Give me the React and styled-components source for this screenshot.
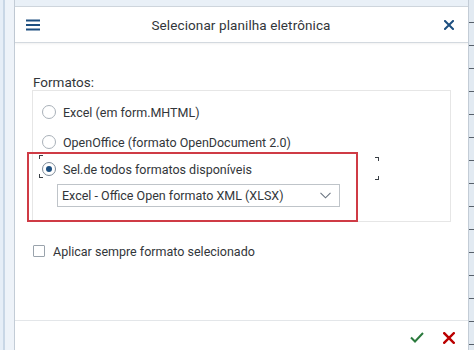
import React from "react";
import styled, { createGlobalStyle } from "styled-components";

const Global = createGlobalStyle`
  html, body { margin: 0; padding: 0; }
  body {
    background: #e4ecf4;
    font-family: Roboto, "Liberation Sans", Arial, sans-serif;
    color: #32363a;
  }
  * { box-sizing: border-box; }
`;

const Page = styled.div`
  width: 474px;
  height: 350px;
  overflow: hidden;
  display: flex;
  background: #e9f0f7;
`;

const LeftStrip = styled.div`
  width: 15px;
  flex: none;
  background: linear-gradient(to right, #e6eef7 0 3px, #c9d7e6 3px 5px, #eef3f9 5px 14px, #c3ccd6 14px 15px);
`;

const RightStrip = styled.div`
  width: 6px;
  flex: none;
  background:
    repeating-linear-gradient(to bottom, transparent 0 21px, #56606a 21px 22px, transparent 22px 23px),
    #e2eaf2;
  background-position: 0 1px;
  border-left: 1px solid #c3ccd6;
`;

const Center = styled.div`
  flex: 1;
  display: flex;
  flex-direction: column;
  padding-top: 6px;
`;

const Dialog = styled.div`
  flex: 1;
  background: #fff;
  display: flex;
  flex-direction: column;
  border-top: 1px solid #cfd6dd;
`;

const Header = styled.div`
  height: 36px;
  display: flex;
  align-items: center;
  padding: 0 12px 0 11px;
  border-bottom: 1px solid #d3d9df;
  box-shadow: 0 1px 2px rgba(0,0,0,0.06);
`;

const Title = styled.div`
  flex: 1;
  text-align: center;
  font-size: 13.5px;
  color: #32363a;
  letter-spacing: 0.1px;
`;

const IconBtn = styled.div`
  width: 14px;
  height: 14px;
  display: flex;
  align-items: center;
  justify-content: center;
  color: ${p => p.$color || "#1d4f80"};
`;

const Body = styled.div`
  position: relative;
  height: 277px;
  padding: 30px 17px 0 17px;
`;

const GroupLabel = styled.div`
  font-size: 13.5px;
  line-height: 18px;
  margin-bottom: -1px;
  padding-left: 1px;
`;

const Group = styled.div`
  border: 1px solid #e6e6e6;
  padding: 9px 9px 14px 9px;
  display: flex;
  flex-direction: column;
`;

const RadioRow = styled.div`
  display: flex;
  align-items: center;
  height: 24px;
  margin-top: ${p => p.$gap || 0}px;
  font-size: 12.5px;
`;

const RadioCircle = styled.span`
  width: 14px;
  height: 14px;
  border-radius: 50%;
  border: 1px solid ${p => (p.$checked ? "#7d8a98" : "#a9b1b9")};
  margin-right: 7px;
  display: flex;
  align-items: center;
  justify-content: center;
  flex: none;
  &::after {
    content: "";
    width: 6px;
    height: 6px;
    border-radius: 50%;
    background: ${p => (p.$checked ? "#1d4f80" : "transparent")};
  }
`;

const Select = styled.div`
  margin-top: 3px;
  margin-left: 15px;
  width: 283px;
  height: 23px;
  border: 1px solid #bfc4c9;
  display: flex;
  align-items: center;
  padding: 0 8px 0 4px;
  font-size: 12.5px;
  color: #32363a;
`;

const SelectText = styled.span`
  flex: 1;
`;

const CheckRow = styled.div`
  display: flex;
  align-items: center;
  margin-top: 20px;
  padding-left: 1px;
  font-size: 12.5px;
  height: 18px;
`;

const CheckBox = styled.span`
  width: 12px;
  height: 12px;
  border: 1px solid #9aa3ac;
  border-radius: 1px;
  margin-right: 8px;
  flex: none;
`;

const Highlight = styled.div`
  position: absolute;
  left: 12px;
  top: 109px;
  width: 331px;
  height: 70px;
  border: 2px solid #cf3b45;
  pointer-events: none;
`;

const Corner = styled.span`
  position: absolute;
  width: 4px;
  height: 4px;
  left: ${p => p.$x}px;
  top: ${p => p.$y}px;
  border-color: #3a3f45;
  border-style: solid;
  border-width: ${p => p.$w};
`;

const Footer = styled.div`
  height: 40px;
  border-top: 1px solid #e3e6e9;
  display: flex;
  align-items: center;
  justify-content: flex-end;
  gap: 18px;
  padding: 0 12px 6px 0;
`;

const Hamburger = () => (
  <svg width="14" height="12" viewBox="0 0 14 12">
    <rect x="0" y="0.5" width="14" height="2" fill="currentColor" />
    <rect x="0" y="5" width="14" height="2" fill="currentColor" />
    <rect x="0" y="9.5" width="14" height="2" fill="currentColor" />
  </svg>
);

const Close = ({ size = 10, w = 2 }) => (
  <svg width={size} height={size} viewBox="0 0 10 10">
    <path d="M1 1 L9 9 M9 1 L1 9" stroke="currentColor" strokeWidth={w} strokeLinecap="square" fill="none" />
  </svg>
);

const Chevron = () => (
  <svg width="11" height="7" viewBox="0 0 11 7">
    <path d="M0.5 0.8 L5.5 5.8 L10.5 0.8" stroke="#6a7480" strokeWidth="1.1" fill="none" />
  </svg>
);

const Check = () => (
  <svg width="14" height="11" viewBox="0 0 14 11">
    <path d="M1 5.5 L5 9.5 L13 1" stroke="#2b7a3d" strokeWidth="2" fill="none" />
  </svg>
);

export default function App() {
  return (
    <>
      <Global />
      <Page>
        <LeftStrip />
        <Center>
          <Dialog>
            <Header>
              <IconBtn><Hamburger /></IconBtn>
              <Title>Selecionar planilha eletrônica</Title>
              <IconBtn><Close /></IconBtn>
            </Header>
            <Body>
              <GroupLabel>Formatos:</GroupLabel>
              <Group>
                <RadioRow><RadioCircle />Excel (em form.MHTML)</RadioRow>
                <RadioRow $gap={6}><RadioCircle />OpenOffice (formato OpenDocument 2.0)</RadioRow>
                <RadioRow $gap={3}><RadioCircle $checked />Sel.de todos formatos disponíveis</RadioRow>
                <Select>
                  <SelectText>Excel - Office Open formato XML (XLSX)</SelectText>
                  <Chevron />
                </Select>
              </Group>
              <CheckRow><CheckBox />Aplicar sempre formato selecionado</CheckRow>
              <Highlight />
              <Corner $x={24} $y={112} $w="1px 0 0 1px" />
              <Corner $x={24} $y={131} $w="0 0 1px 1px" />
              <Corner $x={360} $y={114} $w="1px 1px 0 0" />
              <Corner $x={360} $y={133} $w="0 1px 1px 0" />
            </Body>
            <Footer>
              <IconBtn><Check /></IconBtn>
              <IconBtn $color="#bb0000"><Close size={12} w={2} /></IconBtn>
            </Footer>
          </Dialog>
        </Center>
        <RightStrip />
      </Page>
    </>
  );
}
